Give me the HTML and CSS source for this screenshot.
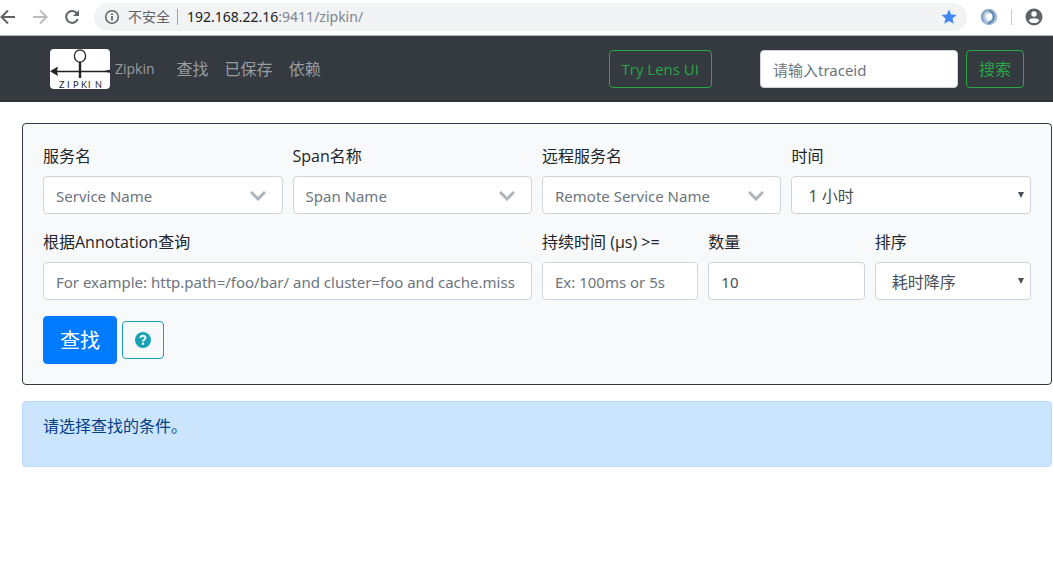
FILE: index.html
```
<!DOCTYPE html>
<html lang="zh-CN">
<head>
<meta charset="utf-8">
<meta name="viewport" content="width=device-width, initial-scale=1">
<title>Zipkin</title>
<link rel="stylesheet" href="styles.css">
</head>
<body>
<div class="browser">
  <button class="browser-btn" type="button" aria-label="后退"><svg width="16" height="16" viewBox="0 0 16 16" fill="none" stroke="#5f6368" stroke-width="2"><path d="M15 8H2M8 1.500 1.500 8 8 14.500"/></svg></button>
  <button class="browser-btn" type="button" aria-label="前进"><svg width="16" height="16" viewBox="0 0 16 16" fill="none" stroke="#babcbe" stroke-width="2"><path d="M1 8h13M8 1.500 14.500 8 8 14.500"/></svg></button>
  <button class="browser-btn" type="button" aria-label="刷新"><svg width="16" height="16" viewBox="0 0 16 16" fill="none"><path d="M13 4.300A6 6 0 1 0 13.800 10" stroke="#5f6368" stroke-width="2"/><path d="M15 1v6H9z" fill="#5f6368"/></svg></button>
  <div class="address">
    <svg width="16" height="16" viewBox="0 0 16 16" fill="none" stroke="#5f6368"><circle cx="8" cy="8" r="6.300" stroke-width="1.500"/><path d="M8 7v4.500M8 4.300v1.700" stroke-width="1.700"/></svg>
    <span class="insecure">不安全</span>
    <span class="address-line"></span>
    <span class="url"><span class="host">192.168.22.16</span>:9411/zipkin/</span>
    <svg class="star" width="16" height="16" viewBox="0 0 16 16"><path fill="#4285f4" d="M8 .5l2.200 5 5.300.5-4 3.500 1.200 5.300L8 12l-4.700 2.800 1.200-5.300-4-3.500 5.300-.5z"/></svg>
  </div>
  <div class="browser-tools">
    <svg width="18" height="18" viewBox="0 0 18 18" fill="none"><circle cx="9" cy="9" r="6" stroke="#a3bdd7" stroke-width="4.500"/><path d="M8 2C2 3 .5 9 3.500 13.500" stroke="#7d9fc2" stroke-width="1.500"/><path d="M7.500 4c-4 3-2.500 8 1.500 10" stroke="#c9d9e8" stroke-width="2"/><path d="M9 2.500c5 1 6 7 3 10.500-1 1-2.500 2-4 2.500" stroke="#5f89b4" stroke-width="2"/></svg>
    <span class="tools-line"></span>
    <svg width="18" height="18" viewBox="0 0 18 18"><circle cx="9" cy="9" r="8.500" fill="#5f6368"/><circle cx="9" cy="6" r="2.700" fill="#fff"/><path d="M3.700 12.400c1.200-3 9.400-3 10.600 0-2 3.400-8.600 3.400-10.600 0z" fill="#fff"/></svg>
  </div>
</div>

<nav class="navbar">
  <a class="brand" href="#">
    <svg width="60" height="40" viewBox="0 0 60 40" role="img" aria-label="Zipkin">
      <rect width="60" height="40" rx="4" fill="#fff"/>
      <path d="M4 22.500h56" stroke="#222" stroke-width="1.400"/>
      <path d="M0 22.300l8-4.800-1 4.800 1 4.700zM53 22.300l7-1.500v3z" fill="#222"/>
      <path d="M30 13v16" stroke="#222" stroke-width="2.400"/>
      <ellipse cx="30" cy="7" rx="5.600" ry="6.200" fill="#fff" stroke="#222" stroke-width="1.300"/>
      <text class="logo-text" x="9 17 23 31 38 45" y="39">ZIPKIN</text>
    </svg>
    <span>Zipkin</span>
  </a>
  <div class="nav-links">
    <a href="#">查找</a>
    <a href="#">已保存</a>
    <a href="#">依赖</a>
  </div>
  <button class="btn btn-success lens" type="button">Try Lens UI</button>
  <form class="trace-form">
    <input class="control trace-input" type="text" placeholder="请输入traceid" aria-label="请输入traceid">
    <button class="btn btn-success" type="button">搜索</button>
  </form>
</nav>

<main class="page">
  <form class="card">
    <div class="fields">
      <div class="field span-3">
        <label for="service">服务名</label>
        <div class="picker"><input class="control" id="service" type="text" placeholder="Service Name"><svg class="chevron" width="16" height="10" viewBox="0 0 16 10"><path d="M1 1l7 7 7-7"/></svg></div>
      </div>
      <div class="field span-3">
        <label for="span">Span名称</label>
        <div class="picker"><input class="control" id="span" type="text" placeholder="Span Name"><svg class="chevron" width="16" height="10" viewBox="0 0 16 10"><path d="M1 1l7 7 7-7"/></svg></div>
      </div>
      <div class="field span-3">
        <label for="remote">远程服务名</label>
        <div class="picker"><input class="control" id="remote" type="text" placeholder="Remote Service Name"><svg class="chevron" width="16" height="10" viewBox="0 0 16 10"><path d="M1 1l7 7 7-7"/></svg></div>
      </div>
      <div class="field span-3">
        <label for="lookback">时间</label>
        <div class="picker"><select class="control" id="lookback"><option>1 小时</option></select><svg class="caret" width="6" height="6" viewBox="0 0 6 6"><path d="M0 0h6L3 6z"/></svg></div>
      </div>
      <div class="field span-6">
        <label for="annotation">根据Annotation查询</label>
        <input class="control" id="annotation" type="text" placeholder="For example: http.path=/foo/bar/ and cluster=foo and cache.miss">
      </div>
      <div class="field span-2">
        <label for="duration">持续时间 (μs) &gt;=</label>
        <input class="control" id="duration" type="text" placeholder="Ex: 100ms or 5s">
      </div>
      <div class="field span-2">
        <label for="limit">数量</label>
        <input class="control" id="limit" type="text" value="10">
      </div>
      <div class="field span-2">
        <label for="sort">排序</label>
        <div class="picker"><select class="control" id="sort"><option>耗时降序</option></select><svg class="caret" width="6" height="6" viewBox="0 0 6 6"><path d="M0 0h6L3 6z"/></svg></div>
      </div>
    </div>
    <div class="actions">
      <button class="btn btn-primary" type="button">查找</button>
      <button class="btn btn-info" type="button" aria-label="帮助"><svg width="16" height="16" viewBox="0 0 16 16"><circle cx="8" cy="8" r="8" fill="#17a2b8"/><path d="M5.400 6C5.700 3 10.700 3.200 10.500 6c-.1 1.600-2.500 1.600-2.500 3.500" fill="none" stroke="#f8f9fa" stroke-width="2"/><path d="M6.900 10.600h2.200v2.200H6.900z" fill="#f8f9fa"/></svg></button>
    </div>
  </form>
  <div class="alert" role="alert"><p>请选择查找的条件。</p></div>
</main>
</body>
</html>
```
FILE: styles.css
```
* {
  box-sizing: border-box;
}

body {
  margin: 0;
  background: #fff;
  color: #212529;
  font: 16px/24px "Open Sans", "Noto Sans CJK SC", sans-serif;
}

svg {
  display: block;
  flex: none;
}

a {
  text-decoration: none;
}

button,
input,
select {
  font: inherit;
}

.browser {
  display: flex;
  align-items: center;
  height: 36px;
  padding-bottom: 2px;
  border-bottom: 1px solid #b5b6b8;
}

.browser-btn {
  width: 16px;
  height: 16px;
  margin-right: 16px;
  padding: 0;
  border: 0;
  background: none;
}

.address {
  display: flex;
  flex: 1;
  align-items: center;
  height: 28px;
  margin-left: -2px;
  padding: 0 10px;
  border-radius: 14px;
  background: #f1f3f4;
  color: #80868b;
  font-family: "Noto Sans", "Noto Sans CJK SC", sans-serif;
  font-size: 14px;
}

.insecure {
  margin-left: 8px;
  color: #5f6368;
}

.address-line {
  width: 1px;
  height: 16px;
  margin: 0 9px 0 7px;
  background: #9aa0a6;
}

.host {
  color: #202124;
}

.star {
  margin-left: auto;
}

.browser-tools {
  display: flex;
  align-items: center;
  gap: 13px;
  padding: 0 10px 0 13px;
}

.tools-line {
  width: 1px;
  height: 16px;
  background: #c8cacc;
}

.navbar {
  display: flex;
  align-items: center;
  min-height: 66px;
  padding: 8px 29px 8px 50px;
  border-bottom: 2px solid #2f3439;
  border-top: 2px solid #343a40;
  background: #343a40;
}

.brand {
  display: flex;
  align-items: center;
  gap: 5px;
  color: #999ca0;
  font-size: 14px;
}

.logo-text {
  fill: #222;
  font: 9px "Lato", sans-serif;
}

.nav-links {
  display: flex;
  gap: 16px;
  margin-left: 22px;
}

.nav-links a {
  color: #999ca0;
}

.btn {
  height: 38px;
  padding: 0 12px;
  border: 1px solid;
  border-radius: 4px;
  background: transparent;
  white-space: nowrap;
}

.btn-success {
  border-color: #28a745;
  color: #28a745;
}

.lens {
  margin-left: auto;
  font-size: 15px;
}

.trace-form {
  display: flex;
  gap: 8px;
  margin-left: 48px;
}

.control {
  display: block;
  width: 100%;
  height: 38px;
  padding: 2px 12px 0;
  border: 1px solid #ced4da;
  border-radius: 4px;
  background: #fff;
  color: #495057;
  font-family: "Noto Sans", "Noto Sans CJK SC", sans-serif;
  font-size: 15px;
}

.control::placeholder {
  color: #6c757d;
  opacity: 1;
}

.trace-input {
  width: 198px;
}

select.control {
  padding: 2px 16px 0;
  appearance: none;
  font-size: 16px;
}

.page {
  padding: 21px 1px 0 22px;
}

.card {
  padding: 20px;
  border: 1px solid #343a40;
  border-radius: 4px;
  background: #f8f9fa;
}

.fields {
  display: grid;
  grid-template-columns: repeat(12, 1fr);
  gap: 16px 10px;
}

.field {
  display: flex;
  flex-direction: column;
  gap: 8px;
  min-width: 0;
}

.span-2 {
  grid-column: span 2;
}

.span-3 {
  grid-column: span 3;
}

.span-6 {
  grid-column: span 6;
}

.picker {
  position: relative;
}

.chevron {
  position: absolute;
  top: 15px;
  right: 17px;
  fill: none;
  stroke: #adb5bd;
  stroke-width: 3;
  pointer-events: none;
}

.caret {
  position: absolute;
  top: 16px;
  right: 7px;
  fill: #495057;
  pointer-events: none;
}

.actions {
  display: flex;
  align-items: center;
  gap: 5px;
  margin-top: 16px;
}

.btn-primary {
  height: 48px;
  padding: 2px 16px 0;
  border-color: #007bff;
  background: #007bff;
  color: #fff;
  font-size: 20px;
}

.btn-info {
  border-color: #17a2b8;
}

.alert {
  margin-top: 16px;
  padding: 12px 20px;
  border: 1px solid #b8daff;
  border-radius: 4px;
  background: #cce5ff;
  color: #004085;
}

.alert p {
  margin: 0 0 16px;
}
```
